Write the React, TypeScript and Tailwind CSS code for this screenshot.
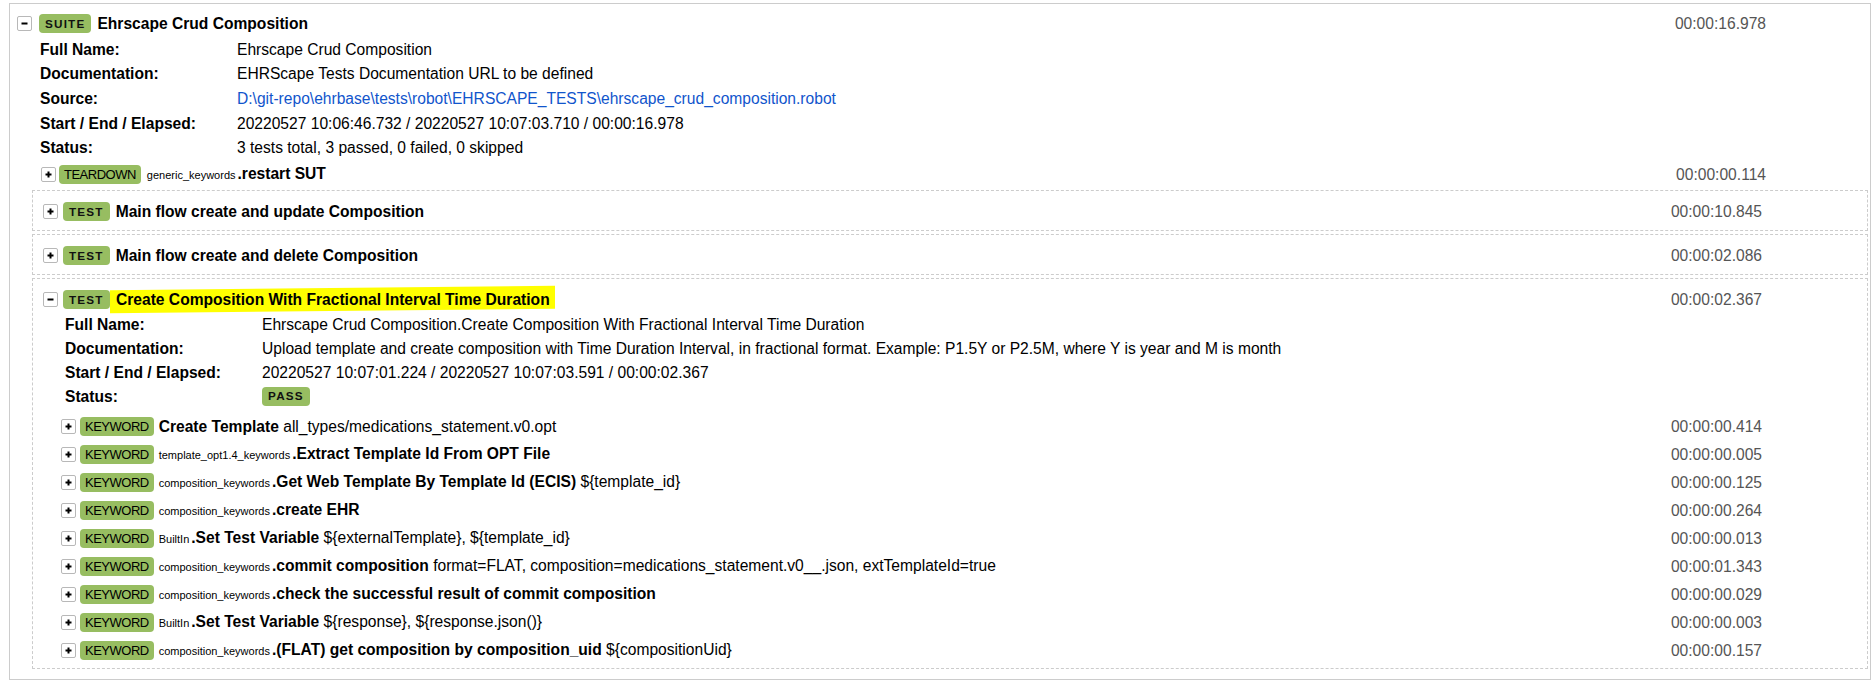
import React from "react";

type Kw = { parent?: string; name: string; args?: string; time: string };

const keywords: Kw[] = [
  { name: "Create Template", args: "all_types/medications_statement.v0.opt", time: "00:00:00.414" },
  { parent: "template_opt1.4_keywords", name: "Extract Template Id From OPT File", time: "00:00:00.005" },
  { parent: "composition_keywords", name: "Get Web Template By Template Id (ECIS)", args: "${template_id}", time: "00:00:00.125" },
  { parent: "composition_keywords", name: "create EHR", time: "00:00:00.264" },
  { parent: "BuiltIn", name: "Set Test Variable", args: "${externalTemplate}, ${template_id}", time: "00:00:00.013" },
  {
    parent: "composition_keywords",
    name: "commit composition",
    args: "format=FLAT, composition=medications_statement.v0__.json, extTemplateId=true",
    time: "00:00:01.343",
  },
  { parent: "composition_keywords", name: "check the successful result of commit composition", time: "00:00:00.029" },
  { parent: "BuiltIn", name: "Set Test Variable", args: "${response}, ${response.json()}", time: "00:00:00.003" },
  { parent: "composition_keywords", name: "(FLAT) get composition by composition_uid", args: "${compositionUid}", time: "00:00:00.157" },
];

const Toggle = ({ open }: { open?: boolean }) => (
  <span className="flex h-[15px] w-[15px] shrink-0 items-center justify-center rounded-[2px] border border-[#b8b8b8] bg-white">
    <svg width="9" height="9" viewBox="0 0 9 9">
      <line x1="1.5" y1="4.5" x2="7.5" y2="4.5" stroke="#000" strokeWidth="2" />
      {!open && <line x1="4.5" y1="1.5" x2="4.5" y2="7.5" stroke="#000" strokeWidth="2" />}
    </svg>
  </span>
);

// spaced labels: SUITE / TEST / PASS
const Label = ({ text, cls = "" }: { text: string; cls?: string }) => (
  <span
    className={`flex h-[19px] shrink-0 items-center rounded-[4px] bg-[#97bd61] px-[6px] text-[11.7px] leading-none font-bold tracking-[1.2px] text-[#111] ${cls}`}
  >
    {text}
  </span>
);

// keyword type labels: KEYWORD / TEARDOWN
const KwLabel = ({ text, cls = "" }: { text: string; cls?: string }) => (
  <span
    className={`flex h-[19px] shrink-0 items-center rounded-[4px] bg-[#97bd61] px-[5px] text-[13px] leading-none tracking-[-0.5px] text-black ${cls}`}
  >
    {text}
  </span>
);

const Time = ({ t }: { t: string }) => <span className="shrink-0 text-[#555]">{t}</span>;

const Meta = ({ rows, pl }: { rows: [string, React.ReactNode, number?][]; pl: string }) => (
  <div className={pl}>
    {rows.map(([k, v, h]) => (
      <div key={k} className="flex items-center" style={{ height: h ?? 24 }}>
        <span className="w-[197px] shrink-0 font-bold">{k}</span>
        <span>{v}</span>
      </div>
    ))}
  </div>
);

const Parent = ({ name }: { name: string }) => <span className="mr-[2px] text-[11px]">{name}</span>;

const KwRow = ({ kw }: { kw: Kw }) => (
  <div className="flex h-[28px] items-center pl-[28px] pr-[105px]">
    <Toggle />
    <KwLabel text="KEYWORD" cls="ml-[4px]" />
    <span className="ml-[5px] flex-1 whitespace-nowrap">
      {kw.parent && <Parent name={kw.parent} />}
      <span className="font-bold">
        {kw.parent ? "." : ""}
        {kw.name}
      </span>
      {kw.args && <span> {kw.args}</span>}
    </span>
    <Time t={kw.time} />
  </div>
);

const TestHead = ({ name, time, open, mark }: { name: string; time: string; open?: boolean; mark?: boolean }) => (
  <div className={`flex h-[19px] box-content items-center pl-[10px] pr-[105px] pt-[11px] ${open ? "pb-[3px]" : "pb-[9px]"}`}>
    <Toggle open={open} />
    <Label text="TEST" cls="ml-[5px]" />
    <span className="flex flex-1 items-center">
      {mark ? (
        <span className="-skew-y-[0.6deg] bg-[#ffff00] py-[2px] pl-[6px] pr-[5px] font-bold">
          <span className="inline-block skew-y-[0.6deg]">{name}</span>
        </span>
      ) : (
        <span className="ml-[6px] font-bold">{name}</span>
      )}
    </span>
    <Time t={time} />
  </div>
);

export default function App() {
  return (
    <div className="min-h-screen bg-white pl-[9px] pr-[3px] pt-[3px] font-['Liberation_Sans',Arial,sans-serif] text-[15.6px] leading-[19px] text-black">
      <div className="border border-[#ccc] pb-[10px]">
        {/* suite header */}
        <div className="box-content flex h-[19px] items-center pl-[7px] pr-[104px] pt-[10px] pb-[4px]">
          <Toggle open />
          <Label text="SUITE" cls="ml-[7px]" />
          <span className="ml-[6px] flex-1 font-bold">Ehrscape Crud Composition</span>
          <Time t="00:00:16.978" />
        </div>

        <Meta
          pl="pl-[30px]"
          rows={[
            ["Full Name:", "Ehrscape Crud Composition"],
            ["Documentation:", "EHRScape Tests Documentation URL to be defined"],
            [
              "Source:",
              <span className="text-[#15c]">
                D:\git-repo\ehrbase\tests\robot\EHRSCAPE_TESTS\ehrscape_crud_composition.robot
              </span>,
              26,
            ],
            ["Start / End / Elapsed:", "20220527 10:06:46.732 / 20220527 10:07:03.710 / 00:00:16.978"],
            ["Status:", "3 tests total, 3 passed, 0 failed, 0 skipped"],
          ]}
        />

        {/* teardown */}
        <div className="box-content flex h-[19px] items-center pl-[31px] pr-[104px] pt-[6px] pb-[4px]">
          <Toggle />
          <KwLabel text="TEARDOWN" cls="ml-[3px]" />
          <span className="ml-[6px] flex-1 whitespace-nowrap">
            <Parent name="generic_keywords" />
            <span className="font-bold">.restart SUT</span>
          </span>
          <Time t="00:00:00.114" />
        </div>

        <div className="ml-[22px] mr-[2px] mt-[2px] flex flex-col gap-[3px]">
          <div className="border border-dashed border-[#ccc]">
            <TestHead name="Main flow create and update Composition" time="00:00:10.845" />
          </div>
          <div className="border border-dashed border-[#ccc]">
            <TestHead name="Main flow create and delete Composition" time="00:00:02.086" />
          </div>
          <div className="border border-dashed border-[#ccc] pb-[4px]">
            <TestHead name="Create Composition With Fractional Interval Time Duration" time="00:00:02.367" open mark />
            <Meta
              pl="pl-[32px]"
              rows={[
                ["Full Name:", "Ehrscape Crud Composition.Create Composition With Fractional Interval Time Duration"],
                [
                  "Documentation:",
                  "Upload template and create composition with Time Duration Interval, in fractional format. Example: P1.5Y or P2.5M, where Y is year and M is month",
                ],
                ["Start / End / Elapsed:", "20220527 10:07:01.224 / 20220527 10:07:03.591 / 00:00:02.367"],
                ["Status:", <Label text="PASS" cls="h-[17px]" />],
              ]}
            />
            <div className="mt-[4px]">
              {keywords.map((kw, i) => (
                <KwRow key={i} kw={kw} />
              ))}
            </div>
          </div>
        </div>
      </div>
    </div>
  );
}
